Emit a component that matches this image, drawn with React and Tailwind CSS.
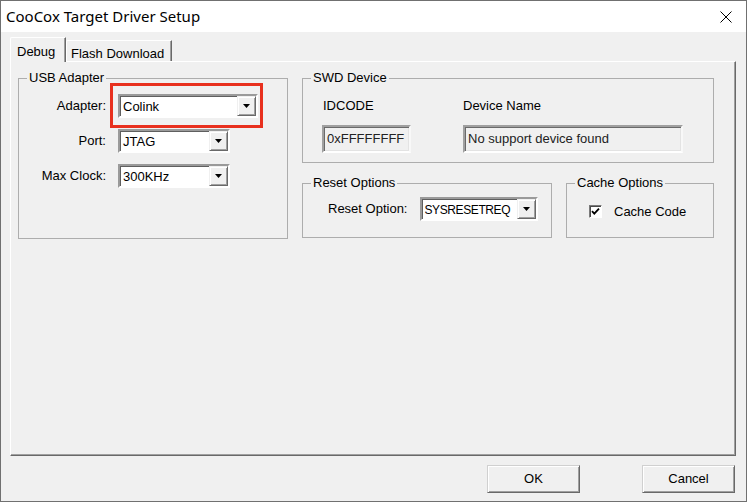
import React from "react";

const FONT = { fontFamily: '"Liberation Sans", Arial, sans-serif' };

function Triangle() {
  return (
    <svg width="7" height="4" viewBox="0 0 7 4">
      <path d="M0 0H7L3.5 4Z" fill="#000" />
    </svg>
  );
}

function Combo({ value, className, textClass = "" }) {
  return (
    <div
      className={
        "flex h-[24px] border-2 border-t-[#9a9a9a] border-l-[#9a9a9a] border-b-white border-r-white bg-white shadow-[inset_1px_1px_0_#5f5f5f] " +
        className
      }
    >
      <div className={"flex flex-1 items-center pl-[3px] pt-[1px] overflow-hidden whitespace-nowrap " + textClass}>{value}</div>
      <div className="flex w-[19px] items-center justify-center bg-[#f0f0f0] border border-t-[#f0f0f0] border-l-[#f0f0f0] border-r-[#696969] border-b-[#696969] shadow-[inset_1px_1px_0_white,inset_-1px_-1px_0_#a0a0a0]">
        <Triangle />
      </div>
    </div>
  );
}

function ReadOnlyBox({ value, className }) {
  return (
    <div
      className={
        "flex h-[28px] items-center border-2 border-t-[#a0a0a0] border-l-[#a0a0a0] border-b-white border-r-[#f8f8f8] bg-[#f0f0f0] pl-[3px] text-[#222] shadow-[inset_1px_1px_0_#6a6a6a,inset_-1px_-1px_0_#e3e3e3] " +
        className
      }
    >
      {value}
    </div>
  );
}

function Group({ title, className, children }) {
  return (
    <div className={"relative border border-[#adadad] " + className}>
      <span className="absolute left-[8px] top-[-9px] bg-[#f0f0f0] px-[2px] leading-[16px]">{title}</span>
      {children}
    </div>
  );
}

function Button({ children }) {
  return (
    <div className="flex h-[28px] w-[93px] items-center justify-center border border-t-[#d0d0d0] border-l-[#d0d0d0] border-r-[#696969] border-b-[#696969] bg-[#f0f0f0] shadow-[inset_1px_1px_0_white,inset_-1px_-1px_0_#a0a0a0]">
      {children}
    </div>
  );
}

export default function App() {
  return (
    <div
      className="flex h-[502px] w-[747px] flex-col border border-[#707070] bg-[#f0f0f0] text-[13px] text-black"
      style={FONT}
    >
      {/* Title bar */}
      <div className="flex h-[31px] shrink-0 items-center justify-between bg-white pl-[5px] pr-[14px]">
        <span className="text-[15px] text-black" style={{ fontFamily: '"Noto Sans", "Open Sans", sans-serif' }}>
          CooCox Target Driver Setup
        </span>
        <svg width="12" height="12" viewBox="0 0 12 12">
          <path d="M0.5 0.5L11.5 11.5M11.5 0.5L0.5 11.5" stroke="#000" strokeWidth="1" />
        </svg>
      </div>

      {/* Body */}
      <div className="flex flex-1 flex-col pt-[5px]">
        {/* Tabs */}
        <div className="relative z-10 ml-[9px] flex h-[24px] items-end">
          <div className="mb-[-1px] flex h-[25px] w-[56px] items-start rounded-tl-[2px] border-l border-t border-r border-l-white border-t-white border-r-[#696969] bg-[#f0f0f0] pl-[6px] pt-[4px] shadow-[inset_-1px_0_0_#a0a0a0]">
            Debug
          </div>
          <div className="flex h-[21px] w-[106px] items-start rounded-tl-[2px] border-l border-t border-r border-l-white border-t-white border-r-[#696969] pl-[4px] pt-[3px] shadow-[inset_-1px_0_0_#a0a0a0]">
            Flash Download
          </div>
        </div>

        {/* Panel */}
        <div className="ml-[9px] flex h-[395px] w-[726px] items-start gap-[14px] border border-l-white border-t-white border-r-[#696969] border-b-[#696969] pl-[7px] pt-[16px] shadow-[inset_-1px_-1px_0_#a0a0a0]">
          {/* USB Adapter */}
          <Group title="USB Adapter" className="h-[161px] w-[270px] shrink-0">
            <div className="flex flex-col gap-[11px] pt-[15px]">
              <div className="flex items-center gap-[12px]">
                <div className="w-[87px] text-right">Adapter:</div>
                <div className="relative">
                  <Combo value="Colink" className="w-[140px]" />
                  <div className="absolute left-[-8px] top-[-11px] h-[45px] w-[153px] border-[3px] border-[#e8301e]" />
                </div>
              </div>
              <div className="flex items-center gap-[12px]">
                <div className="w-[87px] text-right">Port:</div>
                <Combo value="JTAG" className="w-[112px]" />
              </div>
              <div className="flex items-center gap-[12px]">
                <div className="w-[87px] text-right">Max Clock:</div>
                <Combo value="300KHz" className="w-[112px]" />
              </div>
            </div>
          </Group>

          {/* Right column */}
          <div className="flex w-[412px] flex-col gap-[20px]">
            <Group title="SWD Device" className="h-[85px] w-[412px]">
              <div className="flex gap-[52px] pl-[19px] pt-[19px]">
                <div className="flex w-[89px] flex-col gap-[11px]">
                  <div className="pl-[1px] leading-[16px]">IDCODE</div>
                  <ReadOnlyBox value="0xFFFFFFFF" className="w-[89px]" />
                </div>
                <div className="flex w-[220px] flex-col gap-[11px]">
                  <div className="leading-[16px]">Device Name</div>
                  <ReadOnlyBox value="No support device found" className="w-[220px]" />
                </div>
              </div>
            </Group>

            <div className="flex gap-[14px]">
              <Group title="Reset Options" className="h-[55px] w-[250px]">
                <div className="flex items-center gap-[12px] pl-[25px] pt-[13px]">
                  <div>Reset Option:</div>
                  <Combo value="SYSRESETREQ" className="w-[118px]" textClass="text-[12px] tracking-[-0.4px]" />
                </div>
              </Group>
              <Group title="Cache Options" className="h-[55px] w-[148px]">
                <div className="flex items-center gap-[12px] pl-[22px] pt-[21px]">
                  <div className="flex h-[13px] w-[13px] items-center justify-center border border-t-[#7a7a7a] border-l-[#7a7a7a] border-b-white border-r-white bg-white shadow-[inset_1px_1px_0_#4a4a4a]">
                    <svg width="9" height="9" viewBox="0 0 9 9">
                      <path d="M1 4.2L3.3 6.6L8 1.6" stroke="#000" strokeWidth="1.8" fill="none" />
                    </svg>
                  </div>
                  <div className="leading-[13px]">Cache Code</div>
                </div>
              </Group>
            </div>
          </div>
        </div>

        {/* Buttons */}
        <div className="mt-[9px] flex justify-end gap-[62px] pr-[11px]">
          <Button>OK</Button>
          <Button>Cancel</Button>
        </div>
      </div>
    </div>
  );
}
